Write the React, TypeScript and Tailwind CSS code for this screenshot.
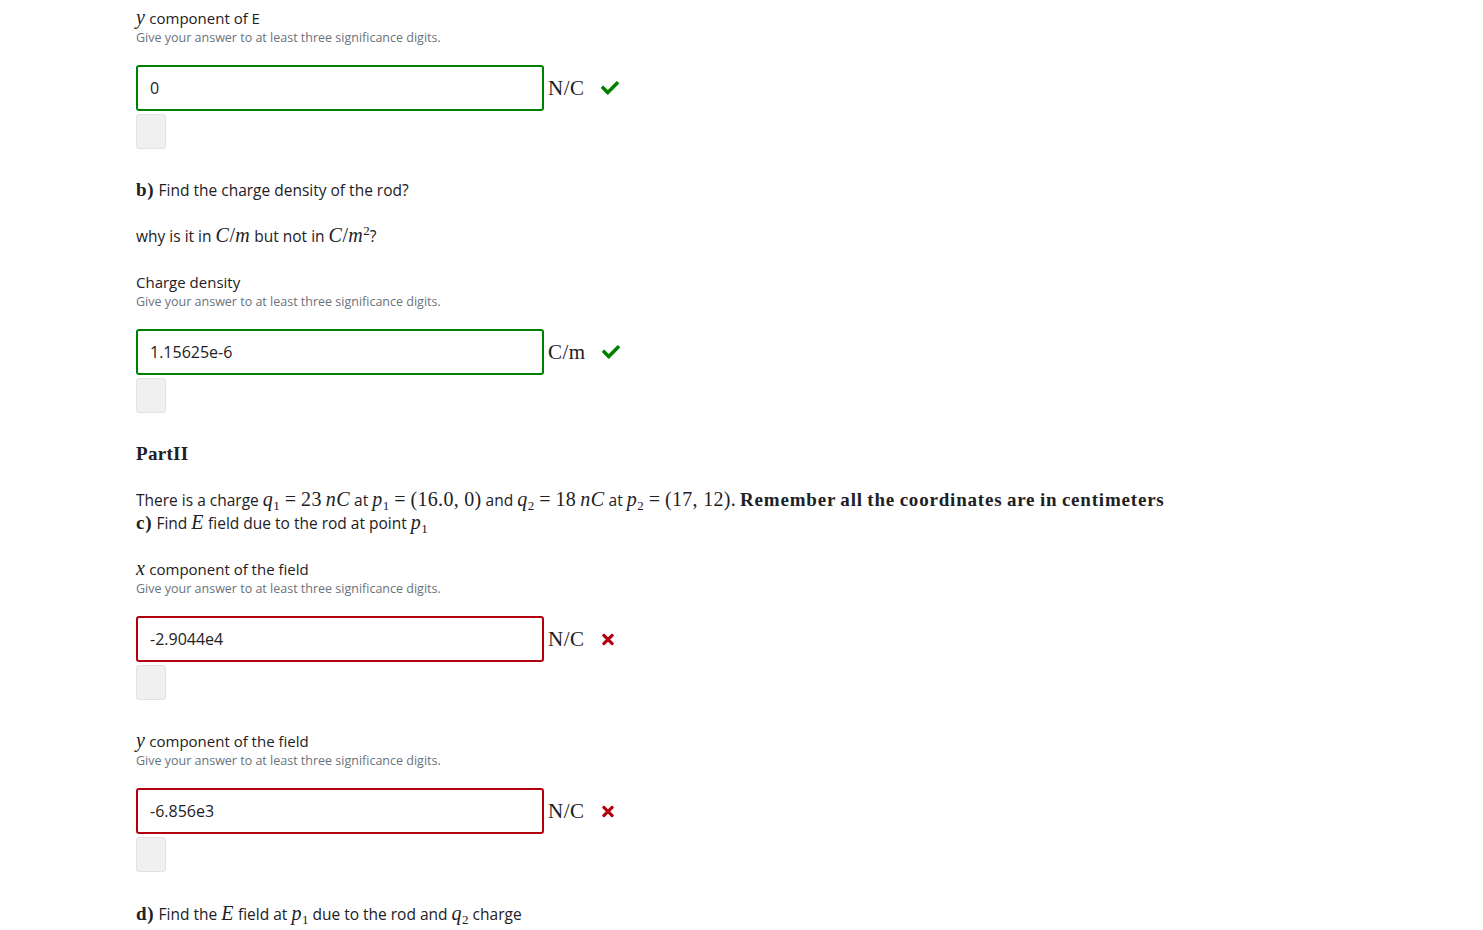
import { FaCheck, FaTimes } from "react-icons/fa";

const SANS = { fontFamily: '"Open Sans", "Noto Sans", sans-serif' };
const SERIF = { fontFamily: '"Liberation Serif", "DejaVu Serif", serif' };

const M = ({ children }: { children: React.ReactNode }) => (
  <span className="text-[20px] leading-none italic tracking-[0.5px]" style={SERIF}>
    {children}
  </span>
);

const B = ({ children }: { children: React.ReactNode }) => (
  <span className="text-[19px] leading-none font-bold tracking-[0.8px] [word-spacing:-1px]" style={SERIF}>
    {children}
  </span>
);

const R = ({ children }: { children: React.ReactNode }) => (
  <span className="text-[20px] leading-none tracking-[0.3px]" style={SERIF}>
    {children}
  </span>
);

const Eq = () => (
  <span className="text-[20px] leading-none mx-[5px]" style={SERIF}>
    =
  </span>
);

const Sub = ({ children }: { children: React.ReactNode }) => (
  <span className="relative top-[4px] text-[13px] leading-none" style={SERIF}>
    {children}
  </span>
);

const Answer = ({
  value,
  unit,
  ok,
}: {
  value: string;
  unit: string;
  ok: boolean;
}) => (
  <div className="mt-[18px]">
    <div className="flex items-center">
      <div
        className={`w-[408px] h-[46px] border-2 rounded-[3px] bg-white flex items-center px-3 text-[16px] text-[#1d2125] ${
          ok ? "border-[#008000]" : "border-[#b3000f]"
        }`}
      >
        {value}
      </div>
      <span className="ml-[4px] text-[21px] leading-none tracking-[0.5px] text-[#1d2125]" style={SERIF}>
        {unit}
      </span>
      {ok ? (
        <FaCheck className="ml-[16px] w-[18px] h-[18px] text-[#008000]" />
      ) : (
        <FaTimes className="ml-[16px] w-[14px] h-[17px] text-[#b3000f]" />
      )}
    </div>
    <div className="mt-[3px] w-[30px] h-[35px] rounded-[3px] bg-[#f0f0f0] border border-[#e2e2e2]" />
  </div>
);

const Field = ({ label }: { label: React.ReactNode }) => (
  <div>
    <div className="text-[15px] leading-[22px] text-[#1d2125]">{label}</div>
    <div className="text-[12.5px] leading-[18px] text-[#6a737b]">
      Give your answer to at least three significance digits.
    </div>
  </div>
);

export default function App() {
  return (
    <div className="min-h-screen bg-white pl-[136px] pt-[7px] text-[#1d2125]" style={SANS}>
      <Field
        label={
          <>
            <M>y</M> component of E
          </>
        }
      />
      <Answer value="0" unit="N/C" ok />

      <p className="mt-[30px] text-[15.5px] leading-[22px]">
        <B>b)</B> Find the charge density of the rod?
      </p>
      <p className="mt-[24px] text-[15.5px] leading-[22px]">
        why is it in <M>C</M>
        <R>/</R>
        <M>m</M> but not in <M>C</M>
        <R>/</R>
        <M>m</M>
        <span className="relative -top-[7px] text-[13px] leading-none" style={SERIF}>
          2
        </span>
        ?
      </p>

      <div className="mt-[24px]">
        <Field label="Charge density" />
      </div>
      <Answer value="1.15625e-6" unit="C/m" ok />

      <p className="mt-[28px] text-[19px] leading-[26px] font-bold tracking-[0.3px]" style={SERIF}>
        PartII
      </p>

      <div className="mt-[22px] text-[15.5px] leading-[23px]">
        <p>
          There is a charge <M>q</M>
          <Sub>1</Sub>
          <Eq />
          <R>23</R> <M>nC</M> at <M>p</M>
          <Sub>1</Sub>
          <Eq />
          <R>(16.0, 0)</R> and <M>q</M>
          <Sub>2</Sub>
          <Eq />
          <R>18</R> <M>nC</M> at <M>p</M>
          <Sub>2</Sub>
          <Eq />
          <R>(17, 12).</R> <B>Remember all the coordinates are in centimeters</B>
        </p>
        <p>
          <B>c)</B> Find <M>E</M> field due to the rod at point <M>p</M>
          <Sub>1</Sub>
        </p>
      </div>

      <div className="mt-[23px]">
        <Field
          label={
            <>
              <M>x</M> component of the field
            </>
          }
        />
      </div>
      <Answer value="-2.9044e4" unit="N/C" ok={false} />

      <div className="mt-[30px]">
        <Field
          label={
            <>
              <M>y</M> component of the field
            </>
          }
        />
      </div>
      <Answer value="-6.856e3" unit="N/C" ok={false} />

      <p className="mt-[31px] text-[15.5px] leading-[22px]">
        <B>d)</B> Find the <M>E</M> field at <M>p</M>
        <Sub>1</Sub> due to the rod and <M>q</M>
        <Sub>2</Sub> charge
      </p>
    </div>
  );
}
